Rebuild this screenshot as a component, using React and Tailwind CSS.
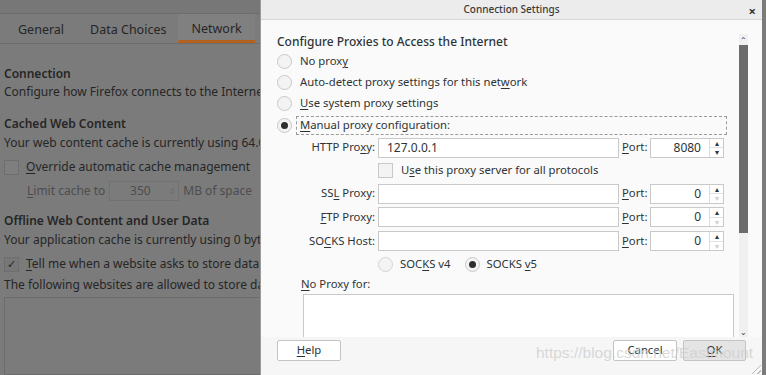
import React from "react";

const Radio = ({ checked, dim }) => (
  <span
    className={`flex h-[15px] w-[15px] shrink-0 items-center justify-center rounded-full border ${
      dim ? "border-[#d4d4d4] bg-[#f4f4f4]" : "border-[#c9c9c9] bg-[#f3f3f3]"
    }`}
  >
    {checked && <span className="h-[7px] w-[7px] rounded-full bg-[#2e2e2e]" />}
  </span>
);

const U = ({ children }) => <span className="underline underline-offset-2">{children}</span>;

const PortField = ({ value, active }) => (
  <div className="flex h-[20px] w-[74px] border border-[#c9c9c9] bg-white">
    <div className="flex flex-1 items-center justify-end pr-[8px] text-[12px]">{value}</div>
    <div className="flex w-[14px] flex-col border-l border-[#dcdcdc]">
      <div className="flex flex-1 items-center justify-center text-[8px] leading-none text-[#333]">▴</div>
      <div
        className={`flex flex-1 items-center justify-center border-t border-[#e2e2e2] text-[8px] leading-none ${
          active ? "text-[#333]" : "text-[#cfcfcf]"
        }`}
      >
        ▾
      </div>
    </div>
  </div>
);

const ProxyRow = ({ label, value, port, active, className }) => (
  <div className={`flex items-center ${className}`}>
    <div className="w-[82px] pr-[3px] text-right">{label}</div>
    <div className="flex h-[20px] w-[241px] items-center border border-[#c9c9c9] bg-white pl-[8px] text-[12px]">
      {value}
    </div>
    <div className="w-[31px] pl-[3px]">
      <U>P</U>ort:
    </div>
    <PortField value={port} active={active} />
  </div>
);

const Background = () => (
  <div className="flex w-[260px] shrink-0 flex-col overflow-hidden whitespace-nowrap bg-[#7b7b7b] text-[12px] text-[#262626] *:shrink-0">
    <div className="h-[14px] border-b border-[#6c6c6c] bg-[#777]" />
    <div className="flex h-[30px] items-stretch border-b border-[#6c6c6c] pl-[4px] text-[12.5px]">
      <div className="flex items-center px-[14px] pt-[3px]">General</div>
      <div className="flex items-center px-[12px] pt-[3px]">Data Choices</div>
      <div className="flex items-center border-b-[3px] border-[#b2611f] bg-[#808080] px-[13px] pt-[5px]">
        Network
      </div>
    </div>
    <div className="flex flex-1 flex-col pl-[4px] *:shrink-0">
      <div className="mt-[21px] h-[18px] font-semibold">Connection</div>
      <div className="h-[18px]">Configure how Firefox connects to the Internet</div>
      <div className="mt-[14px] h-[18px] font-semibold">Cached Web Content</div>
      <div className="mt-[1px] h-[18px]">Your web content cache is currently using 64.0 MB</div>
      <div className="mt-[7px] flex h-[16px] items-center gap-[7px]">
        <span className="h-[15px] w-[15px] border border-[#6e6e6e] bg-[#7e7e7e]" />
        <span>
          <U>O</U>verride automatic cache management
        </span>
      </div>
      <div className="mt-[6px] flex h-[20px] items-center pl-[23px] text-[#4d4d4d]">
        <span>
          <U>L</U>imit cache to
        </span>
        <div className="ml-[4px] flex h-[20px] w-[70px] border border-[#727272]">
          <div className="flex flex-1 items-center justify-center pl-[4px]">350</div>
          <div className="flex w-[12px] items-center justify-center text-[8px] text-[#6a6a6a]">⇕</div>
        </div>
        <span className="ml-[4px]">MB of space</span>
      </div>
      <div className="mt-[11px] h-[18px] font-semibold">Offline Web Content and User Data</div>
      <div className="mt-[1px] h-[18px]">Your application cache is currently using 0 bytes</div>
      <div className="mt-[7px] flex h-[16px] items-center gap-[7px]">
        <span className="flex h-[15px] w-[15px] items-center justify-center border border-[#6e6e6e] bg-[#777] text-[11px]">
          ✓
        </span>
        <span>
          <U>T</U>ell me when a website asks to store data
        </span>
      </div>
      <div className="mt-[4px] h-[18px]">The following websites are allowed to store data</div>
      <div className="mt-[3px] w-[300px] flex-1 border border-[#6c6c6c]" />
    </div>
  </div>
);

const Dialog = () => (
  <div className="relative flex w-[502px] shrink-0 flex-col border-l border-[#9a9a9a] bg-[#fafafa] text-[11.3px] text-[#2e3436]">
    <div className="relative flex h-[20px] shrink-0 items-center justify-center border-b border-[#d6d6d6] bg-[#ececec] text-[10px] font-medium text-[#3a3a3a]">
      Connection Settings
      <span className="absolute right-[6px] top-[2px] text-[13px] font-bold text-[#333]">×</span>
    </div>
    <div className="flex h-[317px] shrink-0 overflow-hidden">
      <div className="flex w-[478px] flex-col whitespace-nowrap pl-[16px] *:shrink-0">
        <div className="mt-[13px] h-[18px] text-[12px] font-medium">Configure Proxies to Access the Internet</div>
        <div className="flex h-[21px] items-center gap-[8px]">
          <Radio />
          <span>
            No prox<U>y</U>
          </span>
        </div>
        <div className="flex h-[21px] items-center gap-[8px]">
          <Radio />
          <span>
            Auto-detect proxy settings for this net<U>w</U>ork
          </span>
        </div>
        <div className="flex h-[21px] items-center gap-[8px]">
          <Radio />
          <span>
            <U>U</U>se system proxy settings
          </span>
        </div>
        <div className="flex h-[22px] items-center gap-[4px]">
          <Radio checked />
          <span className="flex h-[19px] w-[431px] items-center border border-dashed border-[#9a9a9a] pl-[3px]">
            <U>M</U>anual proxy configuration:
          </span>
        </div>
        <div className="flex flex-col pl-[19px] *:shrink-0">
          <ProxyRow
            className="h-[23px]"
            label={
              <>
                HTTP Pro<U>x</U>y:
              </>
            }
            value="127.0.0.1"
            port="8080"
            active
          />
          <div className="flex h-[23px] items-center gap-[8px] pl-[82px]">
            <span className="h-[15px] w-[15px] border border-[#c9c9c9] bg-[#f3f3f3]" />
            <span>
              U<U>s</U>e this proxy server for all protocols
            </span>
          </div>
          <ProxyRow
            className="h-[23px]"
            label={
              <>
                SS<U>L</U> Proxy:
              </>
            }
            port="0"
          />
          <ProxyRow
            className="h-[24px]"
            label={
              <>
                <U>F</U>TP Proxy:
              </>
            }
            port="0"
          />
          <ProxyRow
            className="h-[24px]"
            label={
              <>
                SO<U>C</U>KS Host:
              </>
            }
            port="0"
          />
          <div className="flex h-[23px] items-center pl-[82px]">
            <Radio dim />
            <span className="ml-[7px]">
              SOC<U>K</U>S v4
            </span>
            <span className="ml-[14px]">
              <Radio checked />
            </span>
            <span className="ml-[7px]">
              SOCKS <U>v</U>5
            </span>
          </div>
        </div>
        <div className="flex h-[16px] items-center pl-[24px]">
          <span>
            <U>N</U>o Proxy for:
          </span>
        </div>
        <div className="ml-[26px] mt-[2px] h-[60px] w-[431px] border border-[#c9c9c9] bg-white" />
      </div>
      <div className="mt-[14px] flex h-[303px] w-[9px] flex-col items-center bg-[#f0f0f0]">
        <div className="flex h-[11px] items-center text-[8px] leading-none text-[#333]">⌃</div>
        <div className="h-[188px] w-full bg-[#6b6b6b]" />
        <div className="flex-1" />
        <div className="flex h-[10px] items-center text-[8px] leading-none text-[#333]">⌄</div>
      </div>
    </div>
    <div className="flex flex-1 items-start bg-[#f6f6f6] px-[16px] pt-[3px]">
      <button className="flex h-[21px] w-[64px] items-center justify-center rounded-[2px] border border-[#c4c4c4] bg-white">
        <U>H</U>elp
      </button>
      <div className="flex-1" />
      <button className="flex h-[21px] w-[64px] items-center justify-center rounded-[2px] border border-[#c4c4c4] bg-white">
        Cancel
      </button>
      <button className="ml-[6px] flex h-[21px] w-[63px] items-center justify-center rounded-[2px] border border-[#c4c4c4] bg-[#e4e4e4]">
        <U>O</U>K
      </button>
    </div>
    <div className="pointer-events-none absolute left-[275px] top-[341px] whitespace-nowrap font-['Liberation_Sans',sans-serif] text-[15.5px] text-[#cfcfcf]/80">
      https://blog.csdn.net/Eastmount
    </div>
    <div className="absolute bottom-[1px] right-[1px] h-[9px] w-[9px] bg-[linear-gradient(135deg,transparent_45%,#bbb_45%,#bbb_55%,transparent_55%,transparent_75%,#bbb_75%,#bbb_85%,transparent_85%)]" />
  </div>
);

const App = () => {
  return (
    <div className="flex h-[375px] w-[766px] overflow-hidden bg-[#7b7b7b] font-['Noto_Sans',sans-serif]">
      <Background />
      <Dialog />
      <div className="flex-1 bg-[#7b7b7b]" />
    </div>
  );
};

export default App;
